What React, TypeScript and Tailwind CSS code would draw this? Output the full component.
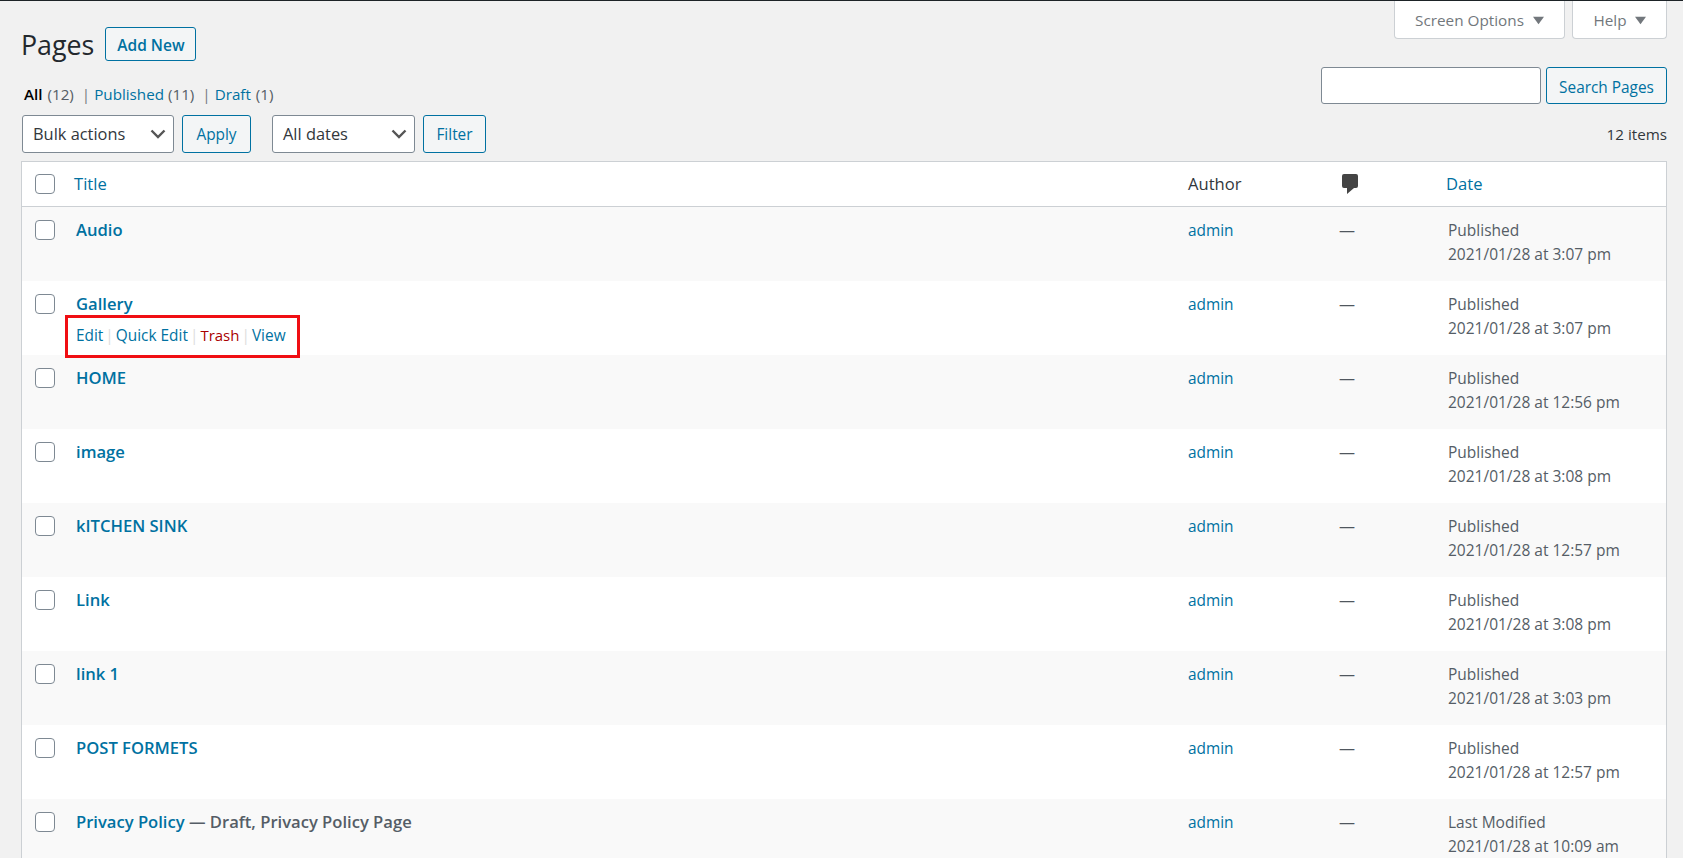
const font = "font-['Open_Sans','Noto_Sans',sans-serif]"

const pages = [
  { title: "Audio", status: "Published", date: "2021/01/28 at 3:07 pm" },
  { title: "Gallery", status: "Published", date: "2021/01/28 at 3:07 pm", actions: true },
  { title: "HOME", status: "Published", date: "2021/01/28 at 12:56 pm" },
  { title: "image", status: "Published", date: "2021/01/28 at 3:08 pm" },
  { title: "kITCHEN SINK", status: "Published", date: "2021/01/28 at 12:57 pm" },
  { title: "Link", status: "Published", date: "2021/01/28 at 3:08 pm" },
  { title: "link 1", status: "Published", date: "2021/01/28 at 3:03 pm" },
  { title: "POST FORMETS", status: "Published", date: "2021/01/28 at 12:57 pm" },
  { title: "Privacy Policy", state: " — Draft, Privacy Policy Page", status: "Last Modified", date: "2021/01/28 at 10:09 am" },
]

const cols = "grid grid-cols-[54px_1fr_151px_110px_217px]"

function Checkbox() {
  return <span className="block h-5 w-5 rounded-[4px] border border-[#7e8993] bg-white" />
}

function Chevron() {
  return (
    <svg viewBox="0 0 20 20" className="h-5 w-5 text-[#555]" fill="none" stroke="currentColor" strokeWidth="2.4">
      <path d="M3.5 6.5 10 13l6.5-6.5" />
    </svg>
  )
}

function Caret() {
  return (
    <svg viewBox="0 0 12 8" className="h-[9px] w-[11px] fill-[#72777c]">
      <path d="M0 0h12L6 8z" />
    </svg>
  )
}

function OutlineButton({ label, className }: { label: string; className: string }) {
  return (
    <button className={`flex items-center justify-center rounded-[3px] border border-[#0071a1] bg-[#f3f5f6] text-[15.4px] text-[#0071a1] ${className}`}>
      {label}
    </button>
  )
}

function SelectBox({ label, className }: { label: string; className: string }) {
  return (
    <div className={`flex h-[38px] items-center justify-between rounded-[3px] border border-[#7e8993] bg-white pl-[10px] pr-[5px] text-[16.4px] text-[#32373c] ${className}`}>
      {label}
      <Chevron />
    </div>
  )
}

function RowActions() {
  return (
    <div className="relative mt-[11px] flex items-baseline text-[15.4px] leading-[20px] text-[#0071a1]">
      <span>Edit</span>
      <span className="mx-[2px] text-[#ddd]">|</span>
      <span>Quick Edit</span>
      <span className="mx-[2px] text-[#ddd]">|</span>
      <span className="text-[15px] text-[#a00]">Trash</span>
      <span className="mx-[2px] text-[#ddd]">|</span>
      <span>View</span>
      <span className="absolute left-[-11px] top-[-10px] h-[43px] w-[235px] border-[3.5px] border-[#f00e13]" />
    </div>
  )
}

export default function App() {
  return (
    <div className={`relative h-[858px] overflow-hidden border-t border-[#1d2327] bg-[#f1f1f1] text-[#32373c] ${font}`}>
      <div className="flex justify-end gap-[7px] pr-[16px]">
        <div className="flex h-[38px] w-[171px] items-center justify-center gap-[9px] rounded-b-[4px] border border-t-0 border-[#ccd0d4] bg-white pt-[2px] text-[15.3px] text-[#72777c]">
          Screen Options <Caret />
        </div>
        <div className="flex h-[38px] w-[95px] items-center justify-center gap-[8px] rounded-b-[4px] border border-t-0 border-[#ccd0d4] bg-white pt-[2px] text-[15.3px] text-[#72777c]">
          Help <Caret />
        </div>
      </div>

      <div className="pl-[21px] pr-[16px]">
        <div className="mt-[-12px] flex items-center gap-[11px]">
          <h1 className="h-[34px] text-[26.8px] leading-[36px] text-[#23282d]">Pages</h1>
          <button className="flex h-[34px] w-[91px] items-center justify-center rounded-[3px] border border-[#0071a1] bg-[#f3f5f6] pt-[4px] text-[15.5px] font-semibold text-[#0071a1]">
            Add New
          </button>
        </div>

        <div className="mt-[6px] flex h-[37px] items-start justify-between">
          <div className="mt-[16px] flex items-center pl-[3px] text-[15.2px] text-[#555d66]">
            <span className="font-semibold text-black">All</span>
            <span className="ml-[5px]">(12)</span>
            <span className="ml-[8px] mr-[4px] text-[#72777c]">|</span>
            <span className="text-[#0071a1]">Published</span>
            <span className="ml-[4px]">(11)</span>
            <span className="ml-[8px] mr-[4px] text-[#72777c]">|</span>
            <span className="text-[#0071a1]">Draft</span>
            <span className="ml-[5px]">(1)</span>
          </div>
          <div className="flex gap-[5px]">
            <div className="h-[37px] w-[220px] rounded-[3px] border border-[#7e8993] bg-white" />
            <OutlineButton label="Search Pages" className="h-[37px] w-[121px] pt-[4px]" />
          </div>
        </div>

        <div className="mt-[11px] flex items-center">
          <SelectBox label="Bulk actions" className="ml-px w-[152px]" />
          <OutlineButton label="Apply" className="ml-[8px] h-[38px] w-[69px] pt-[2px]" />
          <SelectBox label="All dates" className="ml-[21px] w-[143px]" />
          <OutlineButton label="Filter" className="ml-[8px] h-[38px] w-[63px] pt-[2px]" />
          <span className="ml-auto text-[15.2px] text-[#32373c]">12 items</span>
        </div>

        <div className="mt-[8px] border border-[#ccd0d4] bg-white">
          <div className={`${cols} h-[45px] items-center border-b border-[#ccd0d4] text-[16.6px]`}>
            <span className="pl-[13px]"><Checkbox /></span>
            <span className="ml-[-2px] text-[#0071a1]">Title</span>
            <span>Author</span>
            <span className="pl-[3px]">
              <svg viewBox="0 0 16 20" className="h-5 w-4 fill-[#444]">
                <path d="M2 0h12a2 2 0 0 1 2 2v10a2 2 0 0 1-2 2h-2l-7 6v-6H2a2 2 0 0 1-2-2V2a2 2 0 0 1 2-2z" />
              </svg>
            </span>
            <span className="ml-[-3px] text-[#0071a1]">Date</span>
          </div>

          {pages.map((page, i) => (
            <div key={page.title} className={`${cols} h-[74px] items-start pt-[13px] ${i % 2 === 0 ? "bg-[#f9f9f9]" : "bg-white"}`}>
              <span className="pl-[13px]"><Checkbox /></span>
              <div>
                <div className="text-[16.6px] leading-[20px] font-semibold text-[#555d66]">
                  <span className="text-[#0071a1]">{page.title}</span>
                  {page.state}
                </div>
                {page.actions && <RowActions />}
              </div>
              <span className="mt-px text-[15.4px] leading-[20px] text-[#0071a1]">admin</span>
              <span className="text-[16px] leading-[20px] text-[#50575e]">—</span>
              <div className="ml-[-1px] mt-[-2px] text-[15.5px] leading-[24px] text-[#555d66]">
                <div>{page.status}</div>
                <div>{page.date}</div>
              </div>
            </div>
          ))}
        </div>
      </div>
    </div>
  )
}
